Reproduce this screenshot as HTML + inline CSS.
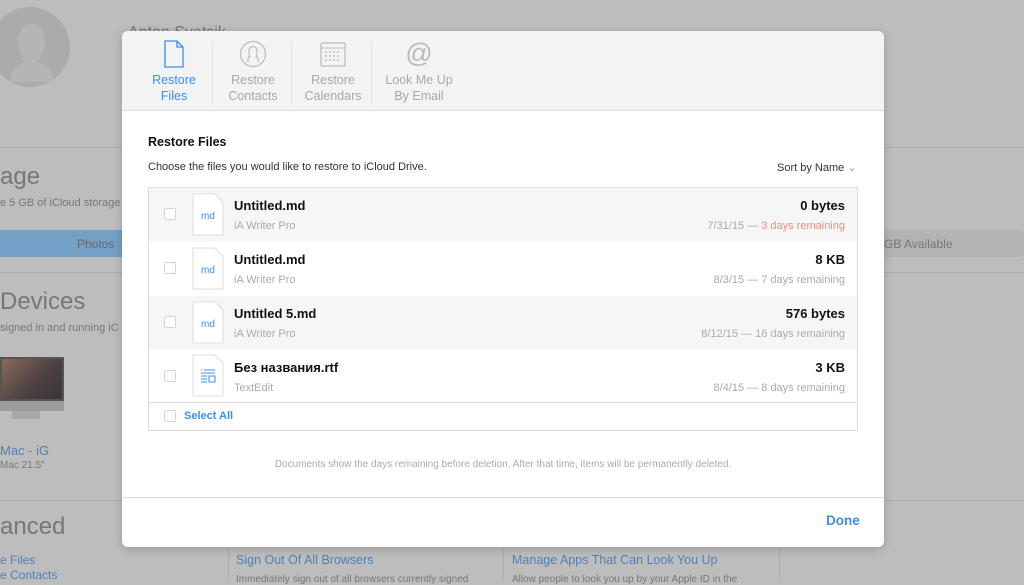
<!DOCTYPE html>
<html><head><meta charset="utf-8"><style>
*{margin:0;padding:0;box-sizing:border-box}
body{width:1024px;height:580px;overflow:hidden;background:#bdbdbd;font-family:"Liberation Sans",sans-serif;position:relative}
.a{position:absolute}
.bg{color:#777}
.link{color:#4f80b8}
.modal{left:122px;top:31px;width:762px;height:516px;background:#fff;border-radius:6px;box-shadow:0 2px 10px rgba(0,0,0,.2);overflow:hidden}
.hdr{left:0;top:0;width:762px;height:80px;background:#f3f3f3;border-bottom:1px solid #ddd}
.tab{top:0;height:80px;text-align:center;font-size:12.5px;line-height:16px;color:#a8a8a8}
.tab svg{display:block;margin:9px auto 4px}
.sep{top:10px;width:1px;height:64px;background:#e2e2e2}
.row{left:0;width:708px;height:54px}
.cb{left:15px;width:12px;height:12px;border:1px solid #d4d4d4;border-radius:2px;background:#fff}
.doc{left:43px;width:32px;height:43px}
.nm{left:85px;font-size:13px;font-weight:bold;color:#111}
.ap{left:85px;font-size:11px;color:#aaa}
.sz{right:12px;font-size:13px;font-weight:bold;color:#111}
.dt{right:12px;font-size:11px;color:#aaa}
</style></head><body>
<div class="a" style="left:-10px;top:7px;width:80px;height:80px;border-radius:50%;background:#ababab"></div>
<svg class="a" style="left:-10px;top:7px" width="80" height="80"><path d="M20 75 Q22 58 35 55 Q28 45 28 33 Q30 17 42 17 Q54 17 55 33 Q55 45 48 55 Q62 58 64 75 Z" fill="#b5b5b5"/></svg>
<div class="a" style="left:0;top:147px;width:1024px;height:1px;background:#adadad"></div>
<div class="a bg" style="left:0;top:163px;font-size:24px">age</div>
<div class="a bg" style="left:0;top:197px;font-size:11px">e 5 GB of iCloud storage</div>
<div class="a" style="left:0;top:230px;width:122px;height:27px;background:#72a0c6"></div>
<div class="a bg" style="left:77px;top:237px;font-size:12px;color:#6a6a6a">Photos</div>
<div class="a" style="left:884px;top:230px;width:140px;height:27px;background:#b3b3b3;border-radius:0 5px 5px 0"></div>
<div class="a bg" style="left:884px;top:237px;font-size:12px">GB Available</div>
<div class="a" style="left:0;top:272px;width:1024px;height:1px;background:#adadad"></div>
<div class="a bg" style="left:0;top:288px;font-size:24px">Devices</div>
<div class="a bg" style="left:0;top:322px;font-size:11px">signed in and running iC</div>
<div class="a" style="left:0;top:357px;width:64px;height:44px;background:linear-gradient(135deg,#8a6a5a,#4a4040 60%,#3a3838);border:2px solid #555"></div>
<div class="a" style="left:0;top:401px;width:64px;height:10px;background:#9c9c9c"></div>
<div class="a" style="left:12px;top:411px;width:28px;height:8px;background:#a8a8a8"></div>
<div class="a link" style="left:0;top:443px;font-size:13px">Mac - iG</div>
<div class="a bg" style="left:0;top:460px;font-size:10px">Mac 21.5"</div>
<div class="a" style="left:0;top:500px;width:1024px;height:1px;background:#adadad"></div>
<div class="a bg" style="left:0;top:513px;font-size:24px">anced</div>
<div class="a link" style="left:0;top:553px;font-size:12px">e Files</div>
<div class="a link" style="left:0;top:568px;font-size:12px">e Contacts</div>
<div class="a" style="left:228px;top:547px;width:1px;height:33px;background:#adadad"></div>
<div class="a" style="left:503px;top:547px;width:1px;height:33px;background:#adadad"></div>
<div class="a" style="left:779px;top:547px;width:1px;height:33px;background:#adadad"></div>
<div class="a link" style="left:236px;top:553px;font-size:12.5px">Sign Out Of All Browsers</div>
<div class="a link" style="left:512px;top:553px;font-size:12.5px">Manage Apps That Can Look You Up</div>
<div class="a bg" style="left:236px;top:574px;font-size:10px">Immediately sign out of all browsers currently signed</div>
<div class="a bg" style="left:512px;top:574px;font-size:10px">Allow people to look you up by your Apple ID in the</div>
<div class="a" style="left:128px;top:24px;font-size:16px;color:#777">Anton Svetsik</div>

<div class="a modal">
 <div class="a hdr"></div>
 <div class="a tab" style="left:22px;width:60px;color:#3d8ef0">
  <svg width="22" height="28"><path d="M2 1 H14 L20 7 V27 H2 Z M14 1 V7 H20" fill="none" stroke="#3d8ef0" stroke-width="1.3"/></svg>Restore<br>Files</div>
 <div class="a sep" style="left:90px"></div>
 <div class="a tab" style="left:96px;width:70px">
  <svg width="28" height="28"><circle cx="14" cy="14" r="12.5" fill="none" stroke="#bbb" stroke-width="1.2"/><path d="M9 22 V19 Q9 17 11 16.5 Q9.5 14 10 10 Q11 6.5 14 6.5 Q17 6.5 18 10 Q18.5 14 17 16.5 Q19 17 19 19 V22" fill="none" stroke="#bbb" stroke-width="1.2"/></svg>Restore<br>Contacts</div>
 <div class="a sep" style="left:169px"></div>
 <div class="a tab" style="left:175px;width:72px">
  <svg width="28" height="28"><rect x="2" y="3" width="24" height="23" rx="1" fill="none" stroke="#bbb" stroke-width="1.2"/><line x1="2" y1="8" x2="26" y2="8" stroke="#bbb"/><g fill="#ccc"><rect x="6" y="11" width="2" height="2"/><rect x="10" y="11" width="2" height="2"/><rect x="14" y="11" width="2" height="2"/><rect x="18" y="11" width="2" height="2"/><rect x="6" y="15" width="2" height="2"/><rect x="10" y="15" width="2" height="2"/><rect x="14" y="15" width="2" height="2"/><rect x="18" y="15" width="2" height="2"/><rect x="6" y="19" width="2" height="2"/><rect x="10" y="19" width="2" height="2"/><rect x="14" y="19" width="2" height="2"/><rect x="18" y="19" width="2" height="2"/></g></svg>Restore<br>Calendars</div>
 <div class="a sep" style="left:249px"></div>
 <div class="a tab" style="left:256px;width:82px">
  <svg width="28" height="28"><text x="14" y="22" text-anchor="middle" font-size="27" font-family="Liberation Sans" fill="#bbb">@</text></svg>Look Me Up<br>By Email</div>

 <div class="a" style="left:26px;top:104px;font-size:12.5px;font-weight:bold;color:#111">Restore Files</div>
 <div class="a" style="left:26px;top:130px;font-size:11px;color:#333">Choose the files you would like to restore to iCloud Drive.</div>
 <div class="a" style="left:655px;top:130px;font-size:11px;color:#333">Sort by Name <span style="color:#999">&#8964;</span></div>

 <div class="a" style="left:26px;top:156px;width:710px;height:244px;border:1px solid #ddd">
  <div class="a row" style="top:0;background:#f6f6f6">
   <div class="a cb" style="top:20px"></div>
   <svg class="a doc" style="top:5px"><path d="M1 1 H23 L31 9 V42 H1 Z" fill="#fff" stroke="#ddd"/><text x="16" y="26" text-anchor="middle" font-size="10" font-family="Liberation Sans" fill="#3d8ef0">md</text></svg>
   <div class="a nm" style="top:10px">Untitled.md</div><div class="a ap" style="top:32px">iA Writer Pro</div>
   <div class="a sz" style="top:10px">0 bytes</div><div class="a dt" style="top:32px">7/31/15 — <span style="color:#f28b82">3 days remaining</span></div>
  </div>
  <div class="a row" style="top:54px">
   <div class="a cb" style="top:20px"></div>
   <svg class="a doc" style="top:5px"><path d="M1 1 H23 L31 9 V42 H1 Z" fill="#fff" stroke="#ddd"/><text x="16" y="26" text-anchor="middle" font-size="10" font-family="Liberation Sans" fill="#3d8ef0">md</text></svg>
   <div class="a nm" style="top:10px">Untitled.md</div><div class="a ap" style="top:32px">iA Writer Pro</div>
   <div class="a sz" style="top:10px">8 KB</div><div class="a dt" style="top:32px">8/3/15 — 7 days remaining</div>
  </div>
  <div class="a row" style="top:108px;background:#f6f6f6">
   <div class="a cb" style="top:20px"></div>
   <svg class="a doc" style="top:5px"><path d="M1 1 H23 L31 9 V42 H1 Z" fill="#fff" stroke="#ddd"/><text x="16" y="26" text-anchor="middle" font-size="10" font-family="Liberation Sans" fill="#3d8ef0">md</text></svg>
   <div class="a nm" style="top:10px">Untitled 5.md</div><div class="a ap" style="top:32px">iA Writer Pro</div>
   <div class="a sz" style="top:10px">576 bytes</div><div class="a dt" style="top:32px">8/12/15 — 16 days remaining</div>
  </div>
  <div class="a row" style="top:162px;height:52px">
   <div class="a cb" style="top:20px"></div>
   <svg class="a doc" style="top:4px"><path d="M1 1 H23 L31 9 V42 H1 Z" fill="#fff" stroke="#ddd"/><g stroke="#3d8ef0" stroke-width="1"><line x1="9" y1="16" x2="10" y2="16"/><line x1="12" y1="16" x2="23" y2="16"/><line x1="9" y1="19" x2="23" y2="19"/><line x1="9" y1="22" x2="15" y2="22"/><line x1="9" y1="25" x2="15" y2="25"/><line x1="9" y1="28" x2="15" y2="28"/><rect x="17" y="22" width="6" height="6" fill="none"/></g></svg>
   <div class="a nm" style="top:10px">Без названия.rtf</div><div class="a ap" style="top:32px">TextEdit</div>
   <div class="a sz" style="top:10px">3 KB</div><div class="a dt" style="top:32px">8/4/15 — 8 days remaining</div>
  </div>
  <div class="a" style="left:0;top:214px;width:708px;height:1px;background:#ddd"></div>
  <div class="a cb" style="top:222px"></div>
  <div class="a" style="left:35px;top:222px;font-size:11px;font-weight:bold;color:#3d8ef0">Select All</div>
 </div>

 <div class="a" style="left:0;top:428px;width:762px;text-align:center;font-size:10px;color:#aaa">Documents show the days remaining before deletion. After that time, items will be permanently deleted.</div>
 <div class="a" style="left:0;top:466px;width:762px;height:1px;background:#ddd"></div>
 <div class="a" style="left:704px;top:482px;font-size:13.5px;font-weight:bold;color:#3d8ef0">Done</div>
</div>
</body></html>
